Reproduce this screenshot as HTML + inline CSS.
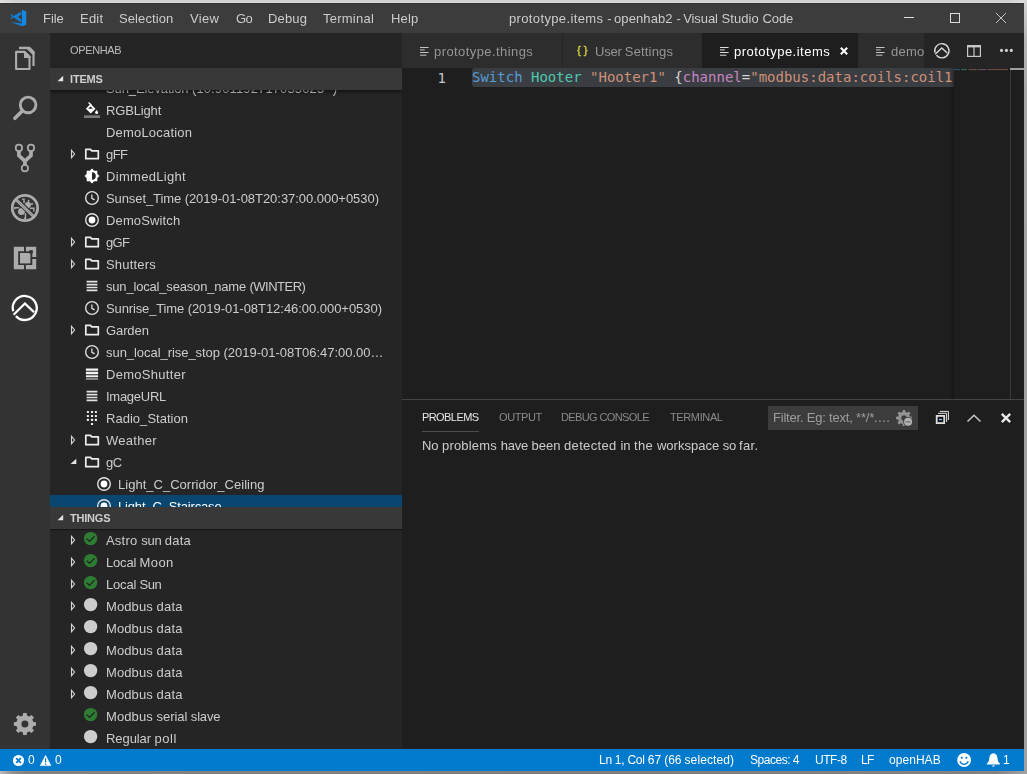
<!DOCTYPE html>
<html lang="en">
<head>
<meta charset="utf-8">
<title>prototype.items - openhab2 - Visual Studio Code</title>
<style>
*{box-sizing:border-box}
html,body{margin:0;padding:0}
body{width:1027px;height:774px;overflow:hidden;position:relative;background:#c9c9c9;font-family:"Liberation Sans",sans-serif;font-size:13px;color:#ccc}
#frameT{position:absolute;left:0;top:0;width:1027px;height:3px;background:linear-gradient(90deg,rgba(255,255,255,.35),rgba(255,255,255,0) 1.5%,rgba(255,255,255,0) 98%,rgba(255,255,255,.3)),linear-gradient(#d0d0d0,#cecece 60%,#dedede 70%,#dcdcdc)}
#frameR{position:absolute;left:1024px;top:0;width:3px;height:774px;background:linear-gradient(#dadada,#cfcfcf 1%,#b8b8b8 5%,#a8a8a8 12%,#a3a3a3 40%,#a0a0a0)}
#frameB{position:absolute;left:0;top:771px;width:1027px;height:3px;background:linear-gradient(90deg,#bdbdbd,#989494 1%,#858181 2.5%,#807c7c 60%,#858282 97%,#a4a4a4)}
#win{position:absolute;left:0;top:3px;width:1024px;height:768px;background:#1e1e1e;overflow:hidden;will-change:transform}
.abs{position:absolute}
svg{display:block;overflow:visible}
i{font-style:normal;white-space:pre}
#title{position:absolute;left:0;top:0;width:1024px;height:30px;background:#3c3c3c;color:#ccc;box-shadow:inset 0 1px 0 #313131}
#title .m{position:absolute;top:0;height:30px;line-height:32px;white-space:nowrap}
#title .wt{position:absolute;top:0;height:30px;line-height:32px;white-space:nowrap;left:509px}
#title svg{position:absolute}
#act{position:absolute;left:0;top:30px;width:50px;height:716px;background:#333}
#act svg{position:absolute}
#side{position:absolute;left:50px;top:30px;width:352px;height:716px;background:#252526;overflow:hidden}
#side h2{position:absolute;left:20px;top:0;margin:0;height:35px;line-height:35px;font-size:11px;font-weight:normal;color:#bbb;white-space:nowrap}
.sech{position:absolute;left:0;width:352px;height:22px;background:#383838;z-index:3}
.sech span{position:absolute;left:20px;top:0;line-height:22px;font-size:11px;font-weight:bold;color:#cfcfcf;white-space:nowrap}
.sech svg{position:absolute;left:0;top:0;width:22px;height:22px}
.tree{position:absolute;left:0;width:352px;overflow:hidden}
.row{position:absolute;left:0;width:352px;height:22px;line-height:24px;white-space:nowrap;color:#ccc}
.row.sel{background:#094771;color:#fff}
.row .lb{position:absolute;top:0;height:22px}
.row .tw{position:absolute;top:3px;width:16px;height:16px}
.row .ic{position:absolute;top:3px;width:16px;height:16px}
#ed{position:absolute;left:402px;top:30px;width:622px;height:716px;background:#1e1e1e;overflow:hidden}
#tabs{position:absolute;left:0;top:0;width:622px;height:35px;background:#252526}
.tab{position:absolute;top:0;height:35px;line-height:37px;background:#2d2d2d;color:#969696;white-space:nowrap;overflow:hidden}
.tab.on{background:#1e1e1e;color:#fff}
.tab svg{position:absolute}
.tab span{position:absolute;top:0}
#acts{position:absolute;left:522px;top:0;width:100px;height:35px;background:#252526}
#acts svg{position:absolute}
#code{position:absolute;left:402px;top:68px;width:552px;height:331px;overflow:hidden;background:#1e1e1e;font-family:"DejaVu Sans Mono","Liberation Mono",monospace;font-size:14px;line-height:19px}
#code .ln{position:absolute;left:0;top:0;width:44px;text-align:right;color:#c6c6c6}
#code .sel{position:absolute;left:70px;top:0;width:600px;height:19px;background:#3a3d41;border-radius:3px 0 0 3px}
#code .tx{position:absolute;left:70px;top:0;white-space:pre;color:#d4d4d4}
#panel{position:absolute;left:0;top:366px;width:622px;height:350px;background:#1e1e1e;border-top:1px solid #454545}
#panel .pt{position:absolute;top:6px;height:22px;line-height:22px;font-size:11px;color:#8a8a8a;white-space:nowrap}
#panel .pt.on{color:#e7e7e7}
#panel svg{position:absolute}
#filter{position:absolute;left:366px;top:6px;width:150px;height:24px;background:#3c3c3c;color:#9d9d9d;line-height:23px}
#filter span{position:absolute;left:5px;top:0;white-space:nowrap}
#status{position:absolute;left:0;top:746px;width:1024px;height:22px;background:#007acc;color:#fff;font-size:12px;line-height:22px}
#status span{position:absolute;top:0;white-space:nowrap}
#status svg{position:absolute}
</style>
</head>
<body>
<div id="frameT"></div><div id="frameR"></div><div id="frameB"></div>
<div id="win">
<div id="title">
<svg style="left:0;top:0" width="36" height="30" viewBox="0 3 36 30"><path d="M22 9.700l4.250 1.700v13.400l-4.250 1.500z" fill="#1587e0"/><path d="M21.400 11.400v3.200l-3.700 2.500 3.700 2.400v3.200l-7.900-5.400-2.300 1.800-1-.8 2.200-1.700-2.200-1.700 1-.8 2.300 1.800z" fill="#0f80d8"/><path d="M10.400 21.900l11.600 1.500v2.900z" fill="#0f80d8"/></svg>
<span class="m" style="letter-spacing:-0.05px;left:43px">File</span>
<span class="m" style="letter-spacing:0.21px;left:80px">Edit</span>
<span class="m" style="letter-spacing:0.1px;left:119px">Selection</span>
<span class="m" style="letter-spacing:0.35px;left:190px">View</span>
<span class="m" style="letter-spacing:-0.49px;left:236px">Go</span>
<span class="m" style="letter-spacing:0.17px;left:268px">Debug</span>
<span class="m" style="letter-spacing:0.24px;left:323px">Terminal</span>
<span class="m" style="letter-spacing:0.18px;left:391px">Help</span>
<span class="wt"><i style="letter-spacing:0.36px">prototype.items </i><i style="letter-spacing:-0.58px">- </i><i style="letter-spacing:0.1px">openhab2 </i><i style="letter-spacing:-0.58px">- </i><i style="letter-spacing:-0.07px">Visual </i><i style="letter-spacing:0.08px">Studio </i><i style="letter-spacing:-0.12px">Code</i></span>
<svg style="left:903px;top:9px" width="12" height="12" viewBox="0 0 12 12"><path d="M1 5.5h10" stroke="#dcdcdc" stroke-width="1"/></svg>
<svg style="left:949px;top:9px" width="12" height="12" viewBox="0 0 12 12"><rect x="1.5" y="1.5" width="9" height="9" fill="none" stroke="#dcdcdc" stroke-width="1"/></svg>
<svg style="left:995px;top:9px" width="12" height="12" viewBox="0 0 12 12"><path d="M1 1l10 10M11 1L1 11" stroke="#d2d2d2" stroke-width=".9"/></svg>
</div>
<div id="act">
<svg style="left:0;top:0" width="50" height="716" viewBox="0 33 50 716">
<g fill="none" stroke="#acacac" stroke-linejoin="round"><path d="M16.100 51.900h8.500l4.900 4.900v12.200h-13.400z" stroke-width="2.100"/><path d="M19 47.950h10.500" stroke-width="2.500"/><path d="M33.500 52.500v13.500" stroke-width="2.200"/></g><path d="M24 51.500h1.500l5 5v1.500h-6.500z" fill="#acacac"/><path d="M27.600 46.900h2.500l4.500 4.500v3.200h-2.200l-5.300-5.400z" fill="#acacac"/>
<circle cx="28.100" cy="104.900" r="7.800" fill="none" stroke="#acacac" stroke-width="2.900"/><path d="M22.200 111L14.900 118.300" stroke="#acacac" stroke-width="3.600" stroke-linecap="round"/>
<g fill="none" stroke="#acacac"><path d="M18.900 151v4.500l6 5.600v4.100M31 151v4.500l-6.100 5.600" stroke-width="3.700" stroke-linejoin="miter"/><circle cx="18.9" cy="147.9" r="3.2" stroke-width="1.7"/><circle cx="31" cy="147.9" r="3.2" stroke-width="1.7"/><circle cx="24.9" cy="168.2" r="3.2" stroke-width="1.7"/></g>
<g fill="none" stroke="#acacac" stroke-width="1.400" stroke-linejoin="miter"><path d="M22.300 199.300h1.700v3.900M28.800 199.800l-.7 3.200M30.300 204.300l2.800-.5M29.800 208.300h4.100v3.200M14.900 209.300v-1.500h4.300M25.500 213.300v5h-1.600"/></g><circle cx="21.500" cy="211.400" r="3.500" fill="#acacac"/><circle cx="27.900" cy="205" r="3" fill="#acacac"/><path d="M15.300 198.300l18.600 18.600" stroke="#333" stroke-width="5" fill="none"/><g fill="none" stroke="#acacac"><circle cx="24.950" cy="208" r="12.700" stroke-width="2.700"/><path d="M16 199.600l17.400 16.600" stroke-width="2.900"/></g><path d="M16.600 200.200l16.200 15.400" stroke="#333" stroke-width=".5" opacity=".55" fill="none"/>
<path d="M13.8 246.8h10.2v4.4h-5.8v13.8h5.8v4.2h-10.2zM25.9 246.8h10.3v10.2h-3.9v-5.8h-6.4zM32.3 259h3.9v10.2h-10.3v-4.2h6.4z" fill="#acacac"/><rect x="20" y="253" width="10.4" height="10.4" fill="#acacac"/><rect x="29.300" y="250.200" width="3.500" height="3.300" fill="#2f2f2f"/>
<g fill="none" stroke="#fff" stroke-width="2.300"><path d="M13.200 311.300A12 12 0 1 1 15.900 316.100"/><path d="M13.600 314.700L24.900 303.500l9.100 8.700"/></g>
<path d="M22.94 715.52L23.06 712.95L26.74 712.95L26.86 715.52L29.50 716.62L31.41 714.89L34.01 717.49L32.28 719.40L33.38 722.04L35.95 722.16L35.95 725.84L33.38 725.96L32.28 728.60L34.01 730.51L31.41 733.11L29.50 731.38L26.86 732.48L26.74 735.05L23.06 735.05L22.94 732.48L20.30 731.38L18.39 733.11L15.79 730.51L17.52 728.60L16.42 725.96L13.85 725.84L13.85 722.16L16.42 722.04L17.52 719.40L15.79 717.49L18.39 714.89L20.30 716.62ZM28.40 724.00A3.5 3.5 0 1 0 21.40 724.00A3.5 3.5 0 1 0 28.40 724.00Z" fill="#acacac" fill-rule="evenodd"/>
</svg>
</div>
<div id="side">
<h2 style="letter-spacing:-0.35px">OPENHAB</h2>
<div class="sech" style="top:35px;box-shadow:0 2px 3px rgba(0,0,0,.5)"><svg viewBox="0 0 22 22"><path d="M13.2 7.8v5.4H7.5z" fill="#e4e4e4"/></svg><span style="letter-spacing:-0.17px">ITEMS</span></div>
<div class="tree" style="top:57px;height:417px">
<div class="row" style="top:-13px"><span class="lb" style="left:56px"><i style="letter-spacing:-0.11px">Sun_Elevation </i><i style="letter-spacing:0.13px">(10.901192717055025 </i><i style="letter-spacing:-0.58px">°)</i></span></div>
<div class="row" style="top:9px"><svg style="left:34px" class="ic" viewBox="0 0 16 16"><path d="M6.500 2.100L11.500 6.650 6.700 11.600 1.900 6.700zM4.100 6.800h4.900L6.500 4.400z" fill="#fff" fill-rule="evenodd"/><path d="M4.500 .5l3 2.800" stroke="#fff" stroke-width="1.300" fill="none"/><path d="M12.600 8.100s1.500 1.600 1.500 2.500a1.500 1.500 0 0 1-3 0c0-.9 1.500-2.500 1.500-2.500z" fill="#fff"/><rect x="0" y="13.300" width="16" height="2.700" fill="#7a7a7a"/></svg><span class="lb" style="letter-spacing:-0.16px;left:56px">RGBLight</span></div>
<div class="row" style="top:31px"><span class="lb" style="letter-spacing:0.19px;left:56px">DemoLocation</span></div>
<div class="row" style="top:53px"><svg class="tw" style="left:16px" viewBox="0 0 16 16"><path d="M5.5 4.3L8.6 8 5.5 11.7z" fill="none" stroke="#d6d6d6" stroke-width="1.1" stroke-linejoin="miter"/></svg><svg style="left:34px" class="ic" viewBox="0 0 16 16"><path d="M1.8 3.4h4.7l1.3 1.45h6.500v7.850h-12.500z" fill="none" stroke="#ededed" stroke-width="1.7" stroke-linejoin="round"/></svg><span class="lb" style="letter-spacing:-0.6px;left:56px">gFF</span></div>
<div class="row" style="top:75px"><svg style="left:34px" class="ic" viewBox="0 0 16 16"><path d="M8 0.6l2.25 2.1h3.05v3.05L15.4 8l-2.1 2.25v3.05h-3.05L8 15.4l-2.25-2.1H2.7v-3.05L0.6 8l2.1-2.25V2.7h3.05z" fill="#fff"/><path d="M8 4.2a3.8 3.8 0 0 1 0 7.6z" fill="#252526"/></svg><span class="lb" style="letter-spacing:0.31px;left:56px">DimmedLight</span></div>
<div class="row" style="top:97px"><svg style="left:34px" class="ic" viewBox="0 0 16 16"><circle cx="8" cy="8" r="6.35" fill="none" stroke="#e2e2e2" stroke-width="1.35"/><path d="M7.9 4.4v3.9l2.7 1.6" fill="none" stroke="#e2e2e2" stroke-width="1.25"/></svg><span class="lb" style="left:56px"><i style="letter-spacing:-0.09px">Sunset_Time </i><i style="letter-spacing:-0.04px">(2019-01-08T20:37:00.000+0530)</i></span></div>
<div class="row" style="top:119px"><svg style="left:34px" class="ic" viewBox="0 0 16 16"><circle cx="8" cy="8" r="6.3" fill="none" stroke="#e2e2e2" stroke-width="1.4"/><circle cx="8" cy="8" r="3.4" fill="#fff"/></svg><span class="lb" style="letter-spacing:0.14px;left:56px">DemoSwitch</span></div>
<div class="row" style="top:141px"><svg class="tw" style="left:16px" viewBox="0 0 16 16"><path d="M5.5 4.3L8.6 8 5.5 11.7z" fill="none" stroke="#d6d6d6" stroke-width="1.1" stroke-linejoin="miter"/></svg><svg style="left:34px" class="ic" viewBox="0 0 16 16"><path d="M1.8 3.4h4.7l1.3 1.45h6.500v7.850h-12.500z" fill="none" stroke="#ededed" stroke-width="1.7" stroke-linejoin="round"/></svg><span class="lb" style="letter-spacing:-0.73px;left:56px">gGF</span></div>
<div class="row" style="top:163px"><svg class="tw" style="left:16px" viewBox="0 0 16 16"><path d="M5.5 4.3L8.6 8 5.5 11.7z" fill="none" stroke="#d6d6d6" stroke-width="1.1" stroke-linejoin="miter"/></svg><svg style="left:34px" class="ic" viewBox="0 0 16 16"><path d="M1.8 3.4h4.7l1.3 1.45h6.500v7.850h-12.500z" fill="none" stroke="#ededed" stroke-width="1.7" stroke-linejoin="round"/></svg><span class="lb" style="letter-spacing:0.2px;left:56px">Shutters</span></div>
<div class="row" style="top:185px"><svg style="left:34px" class="ic" viewBox="0 0 16 16"><path d="M2.6 3.6h10.8M2.6 6.6h10.8M2.6 9.5h10.8M2.6 12.4h10.8" stroke="#e2e2e2" stroke-width="1.7"/></svg><span class="lb" style="left:56px"><i style="letter-spacing:-0.18px">sun_local_season_name </i><i style="letter-spacing:-0.5px">(WINTER)</i></span></div>
<div class="row" style="top:207px"><svg style="left:34px" class="ic" viewBox="0 0 16 16"><circle cx="8" cy="8" r="6.35" fill="none" stroke="#e2e2e2" stroke-width="1.35"/><path d="M7.9 4.4v3.9l2.7 1.6" fill="none" stroke="#e2e2e2" stroke-width="1.25"/></svg><span class="lb" style="left:56px"><i style="letter-spacing:-0.13px">Sunrise_Time </i><i style="letter-spacing:-0.04px">(2019-01-08T12:46:00.000+0530)</i></span></div>
<div class="row" style="top:229px"><svg class="tw" style="left:16px" viewBox="0 0 16 16"><path d="M5.5 4.3L8.6 8 5.5 11.7z" fill="none" stroke="#d6d6d6" stroke-width="1.1" stroke-linejoin="miter"/></svg><svg style="left:34px" class="ic" viewBox="0 0 16 16"><path d="M1.8 3.4h4.7l1.3 1.45h6.500v7.850h-12.500z" fill="none" stroke="#ededed" stroke-width="1.7" stroke-linejoin="round"/></svg><span class="lb" style="letter-spacing:-0.1px;left:56px">Garden</span></div>
<div class="row" style="top:251px"><svg style="left:34px" class="ic" viewBox="0 0 16 16"><circle cx="8" cy="8" r="6.35" fill="none" stroke="#e2e2e2" stroke-width="1.35"/><path d="M7.9 4.4v3.9l2.7 1.6" fill="none" stroke="#e2e2e2" stroke-width="1.25"/></svg><span class="lb" style="left:56px"><i style="letter-spacing:-0.05px">sun_local_rise_stop </i><i style="letter-spacing:-0.02px">(2019-01-08T06:47:00.00…</i></span></div>
<div class="row" style="top:273px"><svg style="left:34px" class="ic" viewBox="0 0 16 16"><path d="M1.9 3.6h12.2M1.9 7h12.2" stroke="#f2f2f2" stroke-width="2.3"/><path d="M1.9 10.2h12.2" stroke="#f2f2f2" stroke-width="1.8"/><path d="M1.9 12.8h12.2" stroke="#8a8a8a" stroke-width="2.2"/></svg><span class="lb" style="letter-spacing:0.29px;left:56px">DemoShutter</span></div>
<div class="row" style="top:295px"><svg style="left:34px" class="ic" viewBox="0 0 16 16"><path d="M2.6 3.6h10.8M2.6 6.6h10.8M2.6 9.5h10.8M2.6 12.4h10.8" stroke="#e2e2e2" stroke-width="1.7"/></svg><span class="lb" style="letter-spacing:-0.27px;left:56px">ImageURL</span></div>
<div class="row" style="top:317px"><svg style="left:34px" class="ic" viewBox="0 0 16 16"><g fill="#f0f0f0"><rect x="2.85" y="1.00" width="2.1" height="2.1" rx=".5"/><rect x="6.95" y="1.00" width="2.1" height="2.1" rx=".5"/><rect x="10.85" y="1.00" width="2.1" height="2.1" rx=".5"/><rect x="2.85" y="4.90" width="2.1" height="2.1" rx=".5"/><rect x="6.95" y="4.90" width="2.1" height="2.1" rx=".5"/><rect x="10.85" y="4.90" width="2.1" height="2.1" rx=".5"/><rect x="2.85" y="8.85" width="2.1" height="2.1" rx=".5"/><rect x="6.95" y="8.85" width="2.1" height="2.1" rx=".5"/><rect x="10.85" y="8.85" width="2.1" height="2.1" rx=".5"/><rect x="6.95" y="12.95" width="2.1" height="2.1" rx=".5"/></g></svg><span class="lb" style="letter-spacing:0.03px;left:56px">Radio_Station</span></div>
<div class="row" style="top:339px"><svg class="tw" style="left:16px" viewBox="0 0 16 16"><path d="M5.5 4.3L8.6 8 5.5 11.7z" fill="none" stroke="#d6d6d6" stroke-width="1.1" stroke-linejoin="miter"/></svg><svg style="left:34px" class="ic" viewBox="0 0 16 16"><path d="M1.8 3.4h4.7l1.3 1.45h6.500v7.850h-12.500z" fill="none" stroke="#ededed" stroke-width="1.7" stroke-linejoin="round"/></svg><span class="lb" style="letter-spacing:0.26px;left:56px">Weather</span></div>
<div class="row" style="top:361px"><svg class="tw" style="left:16px" viewBox="0 0 16 16"><path d="M10.3 4.7v5.3H4.5z" fill="#e4e4e4"/></svg><svg style="left:34px" class="ic" viewBox="0 0 16 16"><path d="M1.8 3.4h4.7l1.3 1.45h6.500v7.850h-12.500z" fill="none" stroke="#ededed" stroke-width="1.7" stroke-linejoin="round"/></svg><span class="lb" style="letter-spacing:-0.52px;left:56px">gC</span></div>
<div class="row" style="top:383px"><svg style="left:46px" class="ic" viewBox="0 0 16 16"><circle cx="8" cy="8" r="6.3" fill="none" stroke="#e2e2e2" stroke-width="1.4"/><circle cx="8" cy="8" r="3.4" fill="#fff"/></svg><span class="lb" style="letter-spacing:0.02px;left:68px">Light_C_Corridor_Ceiling</span></div>
<div class="row sel" style="top:405px"><svg style="left:46px" class="ic" viewBox="0 0 16 16"><circle cx="8" cy="8" r="6.3" fill="none" stroke="#e2e2e2" stroke-width="1.4"/><circle cx="8" cy="8" r="3.4" fill="#fff"/></svg><span class="lb" style="letter-spacing:-0.16px;left:68px">Light_C_Staircase</span></div>
</div>
<div class="sech" style="top:474px;box-shadow:0 1px 1px rgba(0,0,0,.4)"><svg viewBox="0 0 22 22"><path d="M13.2 7.8v5.4H7.5z" fill="#e4e4e4"/></svg><span style="letter-spacing:-0.21px">THINGS</span></div>
<div class="tree" style="top:496px;height:220px">
<div class="row" style="top:0px"><svg class="tw" style="left:16px" viewBox="0 0 16 16"><path d="M5.5 4.3L8.6 8 5.5 11.7z" fill="none" stroke="#d6d6d6" stroke-width="1.1" stroke-linejoin="miter"/></svg><svg style="left:34px" class="ic" viewBox="0 0 16 16"><circle cx="6.6" cy="6.6" r="6.7" fill="#2e7d32"/><path d="M2.600 6.700l3 2.600 5-5.200" fill="none" stroke="#1b2b1d" stroke-width="1.350"/></svg><span class="lb" style="left:56px"><i style="letter-spacing:0.2px">Astro </i><i style="letter-spacing:-0.23px">sun </i><i style="letter-spacing:0.24px">data</i></span></div>
<div class="row" style="top:22px"><svg class="tw" style="left:16px" viewBox="0 0 16 16"><path d="M5.5 4.3L8.6 8 5.5 11.7z" fill="none" stroke="#d6d6d6" stroke-width="1.1" stroke-linejoin="miter"/></svg><svg style="left:34px" class="ic" viewBox="0 0 16 16"><circle cx="6.6" cy="6.6" r="6.7" fill="#2e7d32"/><path d="M2.600 6.700l3 2.600 5-5.200" fill="none" stroke="#1b2b1d" stroke-width="1.350"/></svg><span class="lb" style="left:56px"><i style="letter-spacing:-0.19px">Local </i><i style="letter-spacing:0.42px">Moon</i></span></div>
<div class="row" style="top:44px"><svg class="tw" style="left:16px" viewBox="0 0 16 16"><path d="M5.5 4.3L8.6 8 5.5 11.7z" fill="none" stroke="#d6d6d6" stroke-width="1.1" stroke-linejoin="miter"/></svg><svg style="left:34px" class="ic" viewBox="0 0 16 16"><circle cx="6.6" cy="6.6" r="6.7" fill="#2e7d32"/><path d="M2.600 6.700l3 2.600 5-5.200" fill="none" stroke="#1b2b1d" stroke-width="1.350"/></svg><span class="lb" style="left:56px"><i style="letter-spacing:-0.19px">Local </i><i style="letter-spacing:-0.43px">Sun</i></span></div>
<div class="row" style="top:66px"><svg class="tw" style="left:16px" viewBox="0 0 16 16"><path d="M5.5 4.3L8.6 8 5.5 11.7z" fill="none" stroke="#d6d6d6" stroke-width="1.1" stroke-linejoin="miter"/></svg><svg style="left:34px" class="ic" viewBox="0 0 16 16"><circle cx="6.6" cy="6.6" r="6.7" fill="#cdcdcd"/></svg><span class="lb" style="left:56px"><i style="letter-spacing:0.1px">Modbus </i><i style="letter-spacing:0.24px">data</i></span></div>
<div class="row" style="top:88px"><svg class="tw" style="left:16px" viewBox="0 0 16 16"><path d="M5.5 4.3L8.6 8 5.5 11.7z" fill="none" stroke="#d6d6d6" stroke-width="1.1" stroke-linejoin="miter"/></svg><svg style="left:34px" class="ic" viewBox="0 0 16 16"><circle cx="6.6" cy="6.6" r="6.7" fill="#cdcdcd"/></svg><span class="lb" style="left:56px"><i style="letter-spacing:0.1px">Modbus </i><i style="letter-spacing:0.24px">data</i></span></div>
<div class="row" style="top:110px"><svg class="tw" style="left:16px" viewBox="0 0 16 16"><path d="M5.5 4.3L8.6 8 5.5 11.7z" fill="none" stroke="#d6d6d6" stroke-width="1.1" stroke-linejoin="miter"/></svg><svg style="left:34px" class="ic" viewBox="0 0 16 16"><circle cx="6.6" cy="6.6" r="6.7" fill="#cdcdcd"/></svg><span class="lb" style="left:56px"><i style="letter-spacing:0.1px">Modbus </i><i style="letter-spacing:0.24px">data</i></span></div>
<div class="row" style="top:132px"><svg class="tw" style="left:16px" viewBox="0 0 16 16"><path d="M5.5 4.3L8.6 8 5.5 11.7z" fill="none" stroke="#d6d6d6" stroke-width="1.1" stroke-linejoin="miter"/></svg><svg style="left:34px" class="ic" viewBox="0 0 16 16"><circle cx="6.6" cy="6.6" r="6.7" fill="#cdcdcd"/></svg><span class="lb" style="left:56px"><i style="letter-spacing:0.1px">Modbus </i><i style="letter-spacing:0.24px">data</i></span></div>
<div class="row" style="top:154px"><svg class="tw" style="left:16px" viewBox="0 0 16 16"><path d="M5.5 4.3L8.6 8 5.5 11.7z" fill="none" stroke="#d6d6d6" stroke-width="1.1" stroke-linejoin="miter"/></svg><svg style="left:34px" class="ic" viewBox="0 0 16 16"><circle cx="6.6" cy="6.6" r="6.7" fill="#cdcdcd"/></svg><span class="lb" style="left:56px"><i style="letter-spacing:0.1px">Modbus </i><i style="letter-spacing:0.24px">data</i></span></div>
<div class="row" style="top:176px"><svg style="left:34px" class="ic" viewBox="0 0 16 16"><circle cx="6.6" cy="6.6" r="6.7" fill="#2e7d32"/><path d="M2.600 6.700l3 2.600 5-5.200" fill="none" stroke="#1b2b1d" stroke-width="1.350"/></svg><span class="lb" style="left:56px"><i style="letter-spacing:0.1px">Modbus </i><i style="letter-spacing:-0.06px">serial </i><i style="letter-spacing:-0.18px">slave</i></span></div>
<div class="row" style="top:198px"><svg style="left:34px" class="ic" viewBox="0 0 16 16"><circle cx="6.6" cy="6.6" r="6.7" fill="#cdcdcd"/></svg><span class="lb" style="left:56px"><i style="letter-spacing:-0.07px">Regular </i><i style="letter-spacing:0.49px">poll</i></span></div>
</div>
</div>
<div id="ed">
<div id="tabs">
<div class="tab" style="left:0;width:160px"><svg style="left:18px;top:14px" width="9" height="9" viewBox="0 0 9 9"><path d="M0 .5h8.600M0 2.900h4.800M0 5.500h8.600M0 8.200h6.400" stroke="#c4c4c4" stroke-width="1"/></svg><span style="letter-spacing:0.42px;left:32px">prototype.things</span></div>
<div class="tab" style="left:161px;width:139px"><span style="left:14px;top:-1px;color:#cbcb41;font-size:11.5px;letter-spacing:2.8px;-webkit-text-stroke:.4px #cbcb41">{}</span><span style="left:32px"><i style="letter-spacing:-0.24px">User </i><i style="letter-spacing:0.16px">Settings</i></span></div>
<div class="tab on" style="left:300px;width:156px"><svg style="left:18px;top:14px" width="9" height="9" viewBox="0 0 9 9"><path d="M0 .5h8.600M0 2.900h4.800M0 5.500h8.600M0 8.200h6.400" stroke="#dcdcdc" stroke-width="1"/></svg><span style="letter-spacing:0.49px;left:32px">prototype.items</span><svg style="left:138px;top:14px" width="8" height="8" viewBox="0 0 8 8"><path d="M.8.8l6.4 6.4M7.2.8L.8 7.200" stroke="#fff" stroke-width="2"/></svg></div>
<div class="tab" style="left:456px;width:66px"><svg style="left:18px;top:14px" width="9" height="9" viewBox="0 0 9 9"><path d="M0 .5h8.600M0 2.900h4.800M0 5.500h8.600M0 8.200h6.400" stroke="#c4c4c4" stroke-width="1"/></svg><span style="letter-spacing:0.24px;left:33px">demo.items</span></div>
<div id="acts">
<svg style="left:0;top:0" width="100" height="35" viewBox="924 33 100 35">
<g fill="none" stroke="#dadada" stroke-width="1.400"><path d="M935 52.6A7.1 7.1 0 1 1 936.4 55.300"/><path d="M935.2 54.2l6.600-6.300 5.400 5.100"/></g>
<g fill="none" stroke="#c8c8c8"><rect x="967.6" y="45.6" width="12.800" height="10.800" stroke-width="1.2"/><path d="M967 46.200h14" stroke-width="2.400"/><path d="M974 46v11" stroke-width="1.2"/></g>
<g fill="#d0d0d0"><circle cx="1001.5" cy="50.400" r="1.55"/><circle cx="1006.4" cy="50.400" r="1.55"/><circle cx="1011.3" cy="50.400" r="1.55"/></g>
</svg>
</div>
</div>
<div id="mini" class="abs" style="left:552px;top:35px;width:56px;height:331px;background:#1e1e1e">
<svg class="abs" style="left:0;top:0" width="56" height="4" viewBox="2 0 56 4"><path d="M2 1.500h6" stroke="#2f4f68" stroke-width="1.300"/><path d="M9 1.500h6" stroke="#2d6358" stroke-width="1.300"/><path d="M16.500 1.500h8.500" stroke="#654c41" stroke-width="1.300"/><path d="M26 1.500h1" stroke="#555" stroke-width="1.300"/><path d="M27 1.500h7.500" stroke="#5f4963" stroke-width="1.300"/><path d="M35.500 1.500h20.500" stroke="#654c41" stroke-width="1.300"/></svg>
</div>
<div class="abs" style="left:608px;top:35px;width:1px;height:331px;background:#383838"></div>
<div class="abs" style="left:608px;top:35px;width:14px;height:2px;background:#a0a0a0"></div>
<div id="panel">
<span class="pt on" style="letter-spacing:-0.58px;left:20px">PROBLEMS</span>
<div class="abs" style="left:20px;top:31px;width:57px;height:1px;background:#4c4c4c"></div>
<span class="pt" style="letter-spacing:-0.42px;left:97px">OUTPUT</span>
<span class="pt" style="left:159px"><i style="letter-spacing:-0.61px">DEBUG </i><i style="letter-spacing:-0.62px">CONSOLE</i></span>
<span class="pt" style="letter-spacing:-0.38px;left:268px">TERMINAL</span>
<div id="filter"><span style="letter-spacing:-0.2px">Filter. Eg: text, **/*.…</span></div>
<svg style="left:488px;top:4px" width="137" height="30" viewBox="890 404 137 30"><path d="M902.62 412.06L902.67 410.01L905.33 410.01L905.38 412.06L907.23 412.82L908.71 411.41L910.59 413.29L909.18 414.77L909.94 416.62L911.99 416.67L911.99 419.33L909.94 419.38L909.18 421.23L910.59 422.71L908.71 424.59L907.23 423.18L905.38 423.94L905.33 425.99L902.67 425.99L902.62 423.94L900.77 423.18L899.29 424.59L897.41 422.71L898.82 421.23L898.06 419.38L896.01 419.33L896.01 416.67L898.06 416.62L898.82 414.77L897.41 413.29L899.29 411.41L900.77 412.82ZM906.70 418.00A2.7 2.7 0 1 0 901.30 418.00A2.7 2.7 0 1 0 906.70 418.00Z" fill="#939393" fill-rule="evenodd"/><circle cx="908.1" cy="421.8" r="4.900" fill="#3c3c3c"/><circle cx="908.1" cy="421.8" r="4" fill="#b2b2b2"/><path d="M905.600 421.800h5" stroke="#7c7c7c" stroke-width="1.500"/><path d="M939.800 411.400h8.600v8.600" fill="none" stroke="#e0e0e0" stroke-width="1"/><path d="M938 413.300h8.600v8.700" fill="none" stroke="#e0e0e0" stroke-width="1"/><rect x="936.700" y="415.900" width="7.500" height="7.200" fill="#141414" stroke="#dcdcdc" stroke-width="1.800"/><path d="M939 419.500h3" stroke="#75beff" stroke-width="1.300"/><path d="M967.500 421.500l6.500-6.300 6.500 6.300" fill="none" stroke="#c8c8c8" stroke-width="1.500"/><path d="M1001.800 413.800l8.400 8.400M1010.200 413.800l-8.400 8.400" stroke="#e8e8e8" stroke-width="2.400"/></svg>
<div class="abs" style="left:20px;top:34px;line-height:24px;color:#ccc;white-space:nowrap"><i style="letter-spacing:-0.07px">No </i><i style="letter-spacing:0.17px">problems </i><i style="letter-spacing:-0.2px">have </i><i style="letter-spacing:0.01px">been </i><i style="letter-spacing:0.32px">detected </i><i style="letter-spacing:-0.02px">in </i><i style="letter-spacing:0.3px">the </i><i style="letter-spacing:0.0px">workspace </i><i style="letter-spacing:-0.33px">so </i><i style="letter-spacing:0.31px">far.</i></div>
</div>
</div>
<div id="status">
<svg style="left:0;top:0" width="70" height="22" viewBox="0 749 70 22"><circle cx="18.500" cy="760.500" r="5.600" fill="#fff"/><path d="M16.200 758.200l4.600 4.600M20.800 758.200l-4.600 4.600" stroke="#007acc" stroke-width="1.700"/><path d="M45.600 755.400l5.300 10.200H40.300z" fill="#fff" stroke="#fff" stroke-width=".6" stroke-linejoin="round"/><path d="M45.600 758.300v4.200" stroke="#007acc" stroke-width="1.200"/><circle cx="45.600" cy="764.200" r=".75" fill="#007acc"/></svg>
<span style="letter-spacing:0.15px;left:28px">0</span>
<span style="letter-spacing:0.15px;left:55px">0</span>
<span style="left:599px"><i style="letter-spacing:-0.28px">Ln </i><i style="letter-spacing:-0.26px">1, </i><i style="letter-spacing:-0.23px">Col </i><i style="letter-spacing:-0.09px">67 </i><i style="letter-spacing:-0.11px">(66 </i><i style="letter-spacing:0.11px">selected)</i></span>
<span style="left:750px"><i style="letter-spacing:-0.48px">Spaces: </i><i style="letter-spacing:0.15px">4</i></span>
<span style="letter-spacing:-0.46px;left:815px">UTF-8</span>
<span style="letter-spacing:-0.75px;left:861px">LF</span>
<span style="letter-spacing:0.05px;left:889px">openHAB</span>
<svg style="left:950px;top:0" width="74" height="22" viewBox="950 749 74 22"><circle cx="964.100" cy="760" r="6.900" fill="#fff"/><circle cx="961.800" cy="757.800" r="1.050" fill="#007acc"/><circle cx="966.400" cy="757.800" r="1.050" fill="#007acc"/><path d="M960 761.300a4.300 4.300 0 0 0 8.200 0" fill="none" stroke="#007acc" stroke-width="1.300"/><path d="M993.400 753.300c2.600 0 3.900 2.200 4.100 5 .2 2.800 1 4.300 2.400 5.300v.8h-13v-.8c1.400-1 2.200-2.500 2.400-5.300.2-2.800 1.500-5 4.100-5z" fill="#fff"/><path d="M991.600 765.500h3.600l-1.800 1.400z" fill="#fff"/></svg>
<span style="letter-spacing:0.15px;left:1003px">1</span>
</div>
</div>
<div id="code"><div class="sel"></div><div class="abs" style="left:547px;top:0;width:5px;height:331px;background:linear-gradient(90deg,rgba(0,0,0,0),rgba(0,0,0,.1) 50%,rgba(0,0,0,.32))"></div><div class="ln" style="top:1px">1</div><div class="tx"><span style="color:#569cd6">Switch</span> <span style="color:#4ec9b0">Hooter</span> <span style="color:#ce9178">"Hooter1"</span> <span style="color:#d4d4d4">{</span><span style="color:#c586c0">channel</span>=<span style="color:#ce9178">"modbus:data<span>:</span>coils:coil1:switch"</span>}</div></div>
</body>
</html>
